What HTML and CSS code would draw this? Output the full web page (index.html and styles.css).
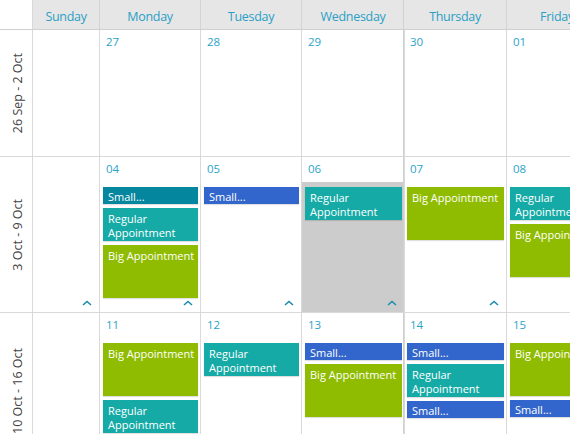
FILE: index.html
```html
<!DOCTYPE html>
<html>
<head>
<meta charset="utf-8">
<link rel="stylesheet" href="styles.css">
</head>
<body>
<div class="cal">
  <div class="corner"></div>
  <div class="hd">Sunday</div>
  <div class="hd">Monday</div>
  <div class="hd">Tuesday</div>
  <div class="hd">Wednesday</div>
  <div class="hd thu">Thursday</div>
  <div class="hd">Friday</div>
  <div class="hd">Saturday</div>

  <div class="wk w1"><span>26 Sep - 2 Oct</span></div>
  <div class="day"></div>
  <div class="day"><div class="num">27</div><div class="body"></div></div>
  <div class="day"><div class="num">28</div><div class="body"></div></div>
  <div class="day"><div class="num">29</div><div class="body"></div></div>
  <div class="day thu"><div class="num">30</div><div class="body"></div></div>
  <div class="day"><div class="num">01</div><div class="body"></div></div>
  <div class="day"><div class="num">02</div><div class="body"></div></div>

  <div class="wk"><span>3 Oct - 9 Oct</span></div>
  <div class="day"><div class="num"></div><div class="body"></div><svg class="chev" viewBox="0 0 10 6"><polyline points="1,5 5,1.5 9,5"/></svg></div>
  <div class="day"><div class="num">04</div><div class="body">
    <div class="appt small dark">Small...</div>
    <div class="appt regular">Regular Appointment</div>
    <div class="appt big">Big Appointment</div>
  </div><svg class="chev" viewBox="0 0 10 6"><polyline points="1,5 5,1.5 9,5"/></svg></div>
  <div class="day"><div class="num">05</div><div class="body">
    <div class="appt small blue">Small...</div>
  </div><svg class="chev" viewBox="0 0 10 6"><polyline points="1,5 5,1.5 9,5"/></svg></div>
  <div class="day sel"><div class="num">06</div><div class="body">
    <div class="appt regular">Regular Appointment</div>
  </div><svg class="chev" viewBox="0 0 10 6"><polyline points="1,5 5,1.5 9,5"/></svg></div>
  <div class="day thu"><div class="num">07</div><div class="body">
    <div class="appt big">Big Appointment</div>
  </div><svg class="chev" viewBox="0 0 10 6"><polyline points="1,5 5,1.5 9,5"/></svg></div>
  <div class="day"><div class="num">08</div><div class="body">
    <div class="appt regular">Regular Appointment</div>
    <div class="appt big">Big Appointment</div>
  </div><svg class="chev" viewBox="0 0 10 6"><polyline points="1,5 5,1.5 9,5"/></svg></div>
  <div class="day"><div class="num">09</div><div class="body"></div></div>

  <div class="wk"><span>10 Oct - 16 Oct</span></div>
  <div class="day"></div>
  <div class="day"><div class="num">11</div><div class="body">
    <div class="appt big">Big Appointment</div>
    <div class="appt regular">Regular Appointment</div>
  </div></div>
  <div class="day"><div class="num">12</div><div class="body">
    <div class="appt regular">Regular Appointment</div>
  </div></div>
  <div class="day"><div class="num">13</div><div class="body">
    <div class="appt small blue">Small...</div>
    <div class="appt big">Big Appointment</div>
  </div></div>
  <div class="day thu"><div class="num">14</div><div class="body">
    <div class="appt small blue">Small...</div>
    <div class="appt regular">Regular Appointment</div>
    <div class="appt small blue">Small...</div>
  </div></div>
  <div class="day"><div class="num">15</div><div class="body">
    <div class="appt big">Big Appointment</div>
    <div class="appt small blue">Small...</div>
  </div></div>
  <div class="day"><div class="num">16</div><div class="body"></div></div>
</div>
</body>
</html>
```

FILE: styles.css
```css
html, body {
  margin: 0;
  padding: 0;
  background: #ffffff;
  overflow: hidden;
}
body {
  width: 570px;
  height: 434px;
  font-family: "Open Sans", "Noto Sans", sans-serif;
}
.cal {
  display: grid;
  grid-template-columns: 33px 67px 101px 101px 103px 102px 101px 101px;
  grid-template-rows: 30px 127px 156px 156px;
  width: 709px;
}
.corner {
  background: #ffffff;
  border-right: 1px solid #d9d9d9;
  border-bottom: 1px solid #cfcfcf;
}
.hd {
  background: #e6e6e6;
  border-right: 1px solid #d4d4d4;
  border-bottom: 1px solid #cfcfcf;
  color: #2a9fc5;
  font-size: 12.5px;
  letter-spacing: -0.3px;
  display: flex;
  align-items: center;
  justify-content: center;
  padding-top: 3px;
  box-sizing: border-box;
}
.wk {
  border-right: 1px solid #d9d9d9;
  border-bottom: 1px solid #d9d9d9;
  display: flex;
  align-items: center;
  justify-content: center;
}
.wk span {
  writing-mode: vertical-rl;
  transform: rotate(180deg);
  font-size: 12.5px;
  color: #444444;
  white-space: nowrap;
  margin-left: 3px;
}
.day {
  position: relative;
  border-right: 1px solid #d9d9d9;
  border-bottom: 1px solid #d9d9d9;
  display: flex;
  flex-direction: column;
  min-width: 0;
}
.thu {
  border-left: 1px solid #d0d0d0;
  margin-left: -2px;
}
.num {
  height: 25px;
  flex: none;
  box-sizing: border-box;
  padding: 5px 0 0 6px;
  font-size: 11.5px;
  line-height: 14px;
  color: #2ca3c8;
}
.body {
  flex: 1;
  display: flex;
  flex-direction: column;
  gap: 4.5px;
  padding: 5px 2px 0 3px;
  min-width: 0;
}
.sel .body {
  background: #cccccc;
}
.appt {
  flex: none;
  box-sizing: border-box;
  color: #ffffff;
  font-size: 11px;
  line-height: 14px;
  padding: 3.5px 5px 0 5px;
  overflow: hidden;
  box-shadow: 0 1px 1px rgba(0, 0, 0, 0.12);
}
.small {
  height: 16.5px;
  padding-top: 3px;
  white-space: nowrap;
}
.regular {
  height: 32.5px;
  background: #16aaa6;
}
.big {
  height: 52.5px;
  background: #8fbc00;
  white-space: nowrap;
}
.dark {
  background: #03869e;
}
.blue {
  background: #3366cc;
}
.chev {
  position: absolute;
  right: 7px;
  bottom: 6px;
  width: 10px;
  height: 6px;
  fill: none;
  stroke: #1b8db0;
  stroke-width: 1.6;
}
```
